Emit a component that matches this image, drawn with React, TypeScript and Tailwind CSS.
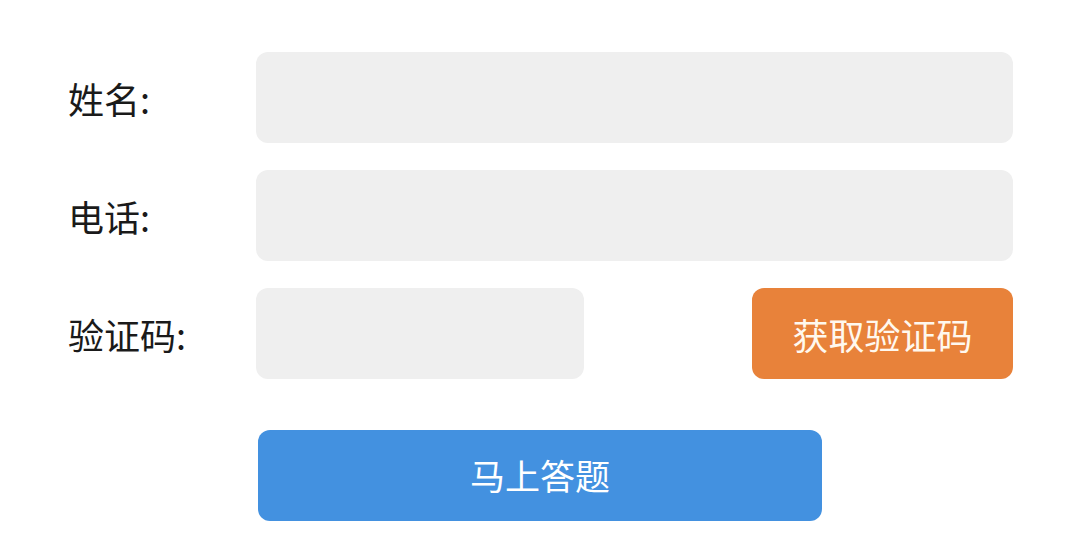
import { useState } from "react";

const font = { fontFamily: '"Noto Sans CJK SC", "Noto Sans", sans-serif' };

function Row({ label, children }: { label: string; children: React.ReactNode }) {
  return (
    <div className="flex h-[91px] items-center">
      <span className="w-[188px] shrink-0 text-[36px] leading-none text-[#1a1a1a]">{label}</span>
      {children}
    </div>
  );
}

export default function App() {
  const [name, setName] = useState("");
  const [phone, setPhone] = useState("");
  const [code, setCode] = useState("");

  return (
    <div className="h-[558px] w-[1080px] bg-white pl-[68px] pt-[52px]" style={font}>
      <div className="flex w-[945px] flex-col gap-[27px]">
        <Row label="姓名:">
          <input
            value={name}
            onChange={(e) => setName(e.target.value)}
            className="h-full flex-1 rounded-[12px] bg-[#efefef] px-4 text-[30px] outline-none"
          />
        </Row>
        <Row label="电话:">
          <input
            value={phone}
            onChange={(e) => setPhone(e.target.value)}
            className="h-full flex-1 rounded-[12px] bg-[#efefef] px-4 text-[30px] outline-none"
          />
        </Row>
        <Row label="验证码:">
          <input
            value={code}
            onChange={(e) => setCode(e.target.value)}
            className="h-full w-[328px] rounded-[12px] bg-[#efefef] px-4 text-[30px] outline-none"
          />
          <button className="ml-auto h-full w-[261px] rounded-[12px] bg-[#e8823a] text-[36px] text-[#fff8ee]">
            获取验证码
          </button>
        </Row>
      </div>
      <button className="ml-[190px] mt-[51px] h-[91px] w-[564px] rounded-[12px] bg-[#4391e0] text-[35px] text-white">
        马上答题
      </button>
    </div>
  );
}
